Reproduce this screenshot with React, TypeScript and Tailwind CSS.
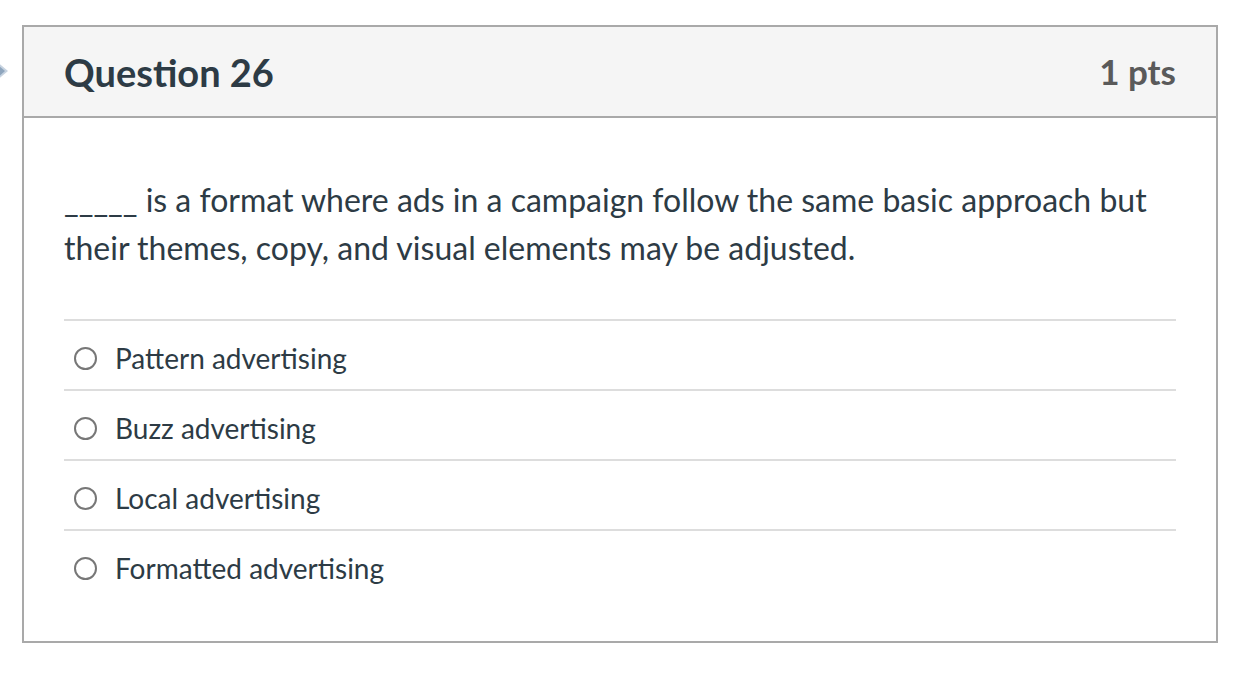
import React from "react";

const options = [
  "Pattern advertising",
  "Buzz advertising",
  "Local advertising",
  "Formatted advertising",
];

export default function App() {
  return (
    <div
      className="w-[1233px] h-[695px] bg-white flex items-start pt-[25px]"
      style={{ fontFamily: "Lato, 'Open Sans', sans-serif" }}
    >
      <div className="w-[22px] shrink-0 pt-[33px]">
        <svg width="22" height="26" viewBox="0 0 22 26">
          <path d="M-5 2 L8 13 L-5 24 Z" fill="#c7d3e0" />
          <path d="M-3 6 L5 13 L-3 20 Z" fill="#8ea5bd" />
        </svg>
      </div>
      <div className="w-[1196px] border-2 border-[#a9a9a9] bg-white">
        <div className="h-[91px] bg-[#f5f5f5] border-b-2 border-[#a9a9a9] flex items-center justify-between pl-[40px] pr-[40px]">
          <span className="text-[38px] font-bold text-[#2d3b45] leading-none">Question 26</span>
          <span className="text-[35px] font-bold text-[#5a5a5a] leading-none">1 pts</span>
        </div>
        <div className="px-[40px] pt-[58px] pb-[42px]">
          <p className="text-[32px] leading-[48px] text-[#2d3b45]">
            _____ is a format where ads in a campaign follow the same basic approach but their themes, copy, and visual elements may be adjusted.
          </p>
          <div className="mt-[47px]">
            {options.map((o) => (
              <div
                key={o}
                className="h-[70px] flex items-center border-t-2 border-[#dddddd] pt-[6px]"
              >
                <span className="w-[23px] h-[23px] rounded-full border-2 border-[#777777] ml-[10px] mr-[18px] shrink-0" />
                <span className="text-[28px] text-[#2d3b45]">{o}</span>
              </div>
            ))}
          </div>
        </div>
      </div>
    </div>
  );
}
